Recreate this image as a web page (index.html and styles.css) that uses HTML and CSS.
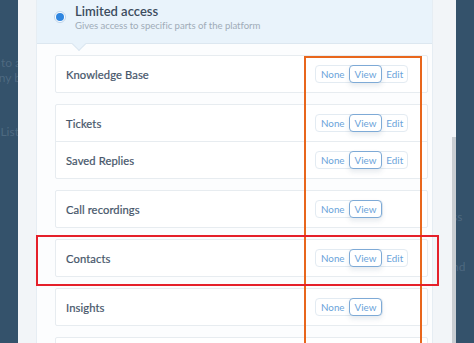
FILE: index.html
```html
<!DOCTYPE html>
<html>
<head>
<meta charset="utf-8">
<link rel="stylesheet" href="styles.css">
</head>
<body>
<div class="screen">
  <div class="strip strip-left">
    <span class="ghost g1">to a</span>
    <span class="ghost g2">ny b</span>
    <span class="ghost g3">List</span>
  </div>
  <div class="modal">
    <div class="panel">
      <div class="header">
        <span class="radio"><span class="dot"></span></span>
        <div class="htext">
          <div class="title">Limited access</div>
          <div class="sub">Gives access to specific parts of the platform</div>
        </div>
        <span class="caret"></span>
      </div>
      <div class="list">
        <div class="card">
          <div class="row"><span class="label">Knowledge Base</span>
            <div class="seg"><span class="opt">None</span><span class="opt on">View</span><span class="opt">Edit</span></div></div>
        </div>
        <div class="card">
          <div class="row"><span class="label">Tickets</span>
            <div class="seg"><span class="opt">None</span><span class="opt on">View</span><span class="opt">Edit</span></div></div>
          <div class="row"><span class="label">Saved Replies</span>
            <div class="seg"><span class="opt">None</span><span class="opt on">View</span><span class="opt">Edit</span></div></div>
        </div>
        <div class="card">
          <div class="row"><span class="label">Call recordings</span>
            <div class="seg"><span class="opt">None</span><span class="opt on">View</span></div></div>
        </div>
        <div class="card">
          <div class="row"><span class="label">Contacts</span>
            <div class="seg"><span class="opt">None</span><span class="opt on">View</span><span class="opt">Edit</span></div></div>
        </div>
        <div class="card">
          <div class="row"><span class="label">Insights</span>
            <div class="seg"><span class="opt">None</span><span class="opt on">View</span></div></div>
        </div>
        <div class="card">
          <div class="row"><span class="label"></span></div>
        </div>
      </div>
    </div>
    <div class="thumb"></div>
  </div>
  <div class="strip strip-right">
    <span class="ghost g4">ss</span>
    <span class="ghost g5">nd</span>
  </div>
  <div class="mark mark-orange"></div>
  <div class="mark mark-red"></div>
</div>
</body>
</html>
```
FILE: styles.css
```css
html, body {
  margin: 0;
  padding: 0;
}
body {
  background: #34526b;
  font-family: "Lato", "Open Sans", sans-serif;
}
.screen {
  position: relative;
  width: 474px;
  height: 343px;
  overflow: hidden;
  display: flex;
}
.strip {
  position: relative;
  background: #34526b;
  overflow: hidden;
}
.strip-left { width: 18px; }
.strip-right { width: 18px; }
.ghost {
  position: absolute;
  color: rgba(190, 205, 220, 0.2);
  font-size: 12px;
  white-space: nowrap;
}
.g1 { right: -3px; top: 55px; }
.g2 { right: -3px; top: 70px; }
.g3 { right: -1px; top: 124px; }
.g4 { left: -4px; top: 209px; }
.g5 { left: -4px; top: 259px; }
.modal {
  position: relative;
  width: 438px;
  background: #f2f5f8;
  padding: 0 23px 0 18px;
  box-sizing: border-box;
}
.panel {
  width: 397px;
  height: 343px;
  background: #fcfdfe;
  border-left: 1px solid #e6edf3;
  border-right: 1px solid #e6edf3;
  box-sizing: border-box;
}
.header {
  position: relative;
  height: 44px;
  background: #e9f3fb;
  border-bottom: 1px solid #dce7f0;
  box-sizing: border-box;
  display: flex;
  align-items: flex-start;
  padding: 4px 0 0 17px;
  gap: 9px;
}
.radio {
  margin-top: 7px;
  width: 12px;
  height: 12px;
  border-radius: 50%;
  background: #ffffff;
  border: 1px solid #bcd3ea;
  box-sizing: border-box;
  display: flex;
  align-items: center;
  justify-content: center;
}
.dot {
  width: 8px;
  height: 8px;
  border-radius: 50%;
  background: #2f86e0;
}
.title {
  font-size: 13px;
  font-weight: 600;
  color: #3c4c5e;
  line-height: 15px;
}
.sub {
  font-size: 9.6px;
  color: #a0acb8;
  line-height: 14px;
  letter-spacing: -0.05px;
}
.caret {
  position: absolute;
  left: 37px;
  bottom: -6px;
  width: 9px;
  height: 9px;
  background: #e9f3fb;
  border-right: 1px solid #dce7f0;
  border-bottom: 1px solid #dce7f0;
  transform: rotate(45deg);
}
.list {
  padding: 11px 4px 0 18px;
  display: flex;
  flex-direction: column;
  gap: 11px;
}
.card {
  background: #ffffff;
  border: 1px solid #e7ecf0;
  border-radius: 2px;
}
.row {
  height: 36px;
  display: grid;
  grid-template-columns: 1fr 112px;
  align-items: center;
  padding-left: 10px;
}
.row + .row {
  border-top: 1px solid #e7ecf0;
}
.label {
  font-size: 11.2px;
  color: #46566a;
  letter-spacing: 0.1px;
  -webkit-text-stroke: 0.2px #46566a;
}
.seg {
  justify-self: start;
  display: flex;
  height: 18px;
  border: 1px solid #e3ebf2;
  border-radius: 4px;
  box-sizing: border-box;
  background: #fff;
}
.opt {
  display: flex;
  align-items: center;
  justify-content: center;
  font-size: 9.8px;
  color: #6aa3da;
  padding: 0 4px;
  height: 16px;
  box-sizing: border-box;
}
.opt:first-child { padding-left: 5px; }
.opt.on {
  height: 18px;
  margin-top: -1px;
  border: 1px solid #7eaad6;
  border-radius: 4px;
  box-shadow: 0 3px 5px rgba(60, 90, 120, 0.12);
  padding: 0 5px;
}
.thumb {
  position: absolute;
  left: 434px;
  top: 137px;
  width: 4px;
  height: 206px;
  background: #c9ced3;
}
.mark {
  position: absolute;
  box-sizing: border-box;
}
.mark-orange {
  left: 304px;
  top: 56px;
  width: 118px;
  height: 300px;
  border: 2.5px solid #e8661c;
}
.mark-red {
  left: 36px;
  top: 235px;
  width: 403px;
  height: 51px;
  border: 2px solid #e5202a;
}
```
